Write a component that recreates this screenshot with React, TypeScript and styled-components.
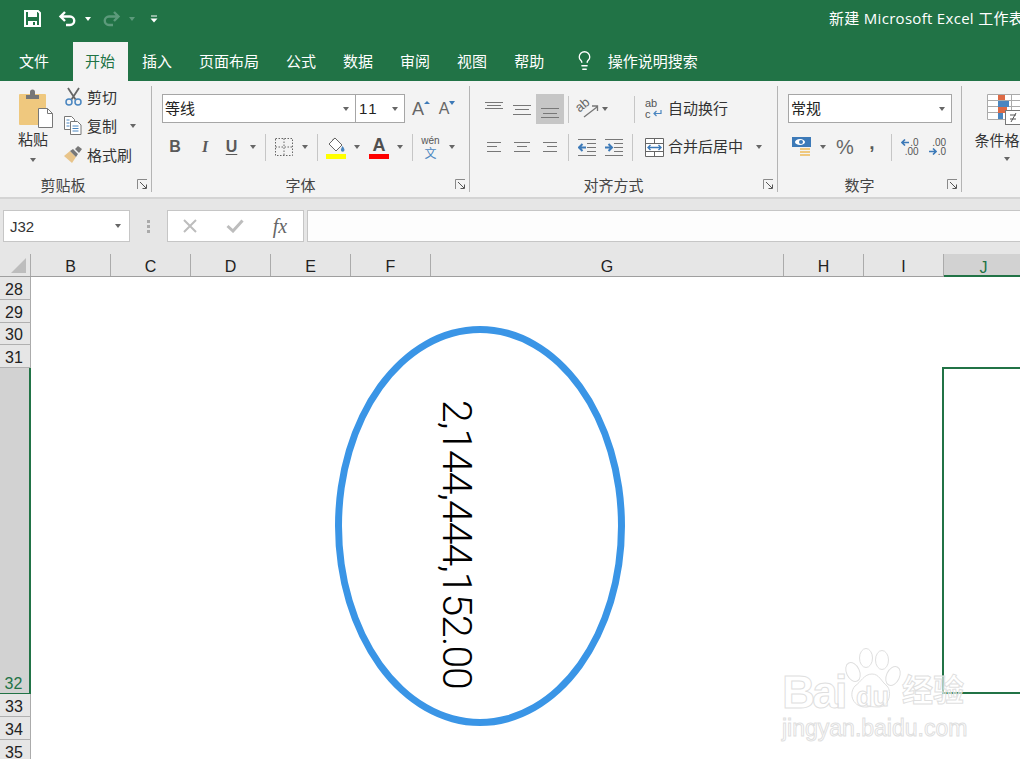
import React from "react";
import styled, { createGlobalStyle } from "styled-components";
import { Lightbulb } from "lucide-react";

const GREEN = "#217346";
const CJK = `"Noto Sans CJK SC", "Liberation Sans", sans-serif`;

const GlobalStyle = createGlobalStyle`
  html, body { margin: 0; padding: 0; background: #fff; }
  body { font-family: ${CJK}; overflow: hidden; }
`;

const Page = styled.div`
  width: 1020px;
  height: 759px;
  overflow: hidden;
  display: flex;
  flex-direction: column;
  background: #fff;
`;

/* title bar + tabs */
const TitleBar = styled.div`
  display: flex;
  align-items: center;
  height: 42px;
  background: ${GREEN};
  color: #fff;
  flex: none;
`;

const QuickAccess = styled.div`
  display: flex;
  align-items: center;
  width: 829px;
  flex: none;
  padding-left: 24px;
  box-sizing: border-box;
  height: 100%;
  padding-bottom: 5px;
`;

const Title = styled.div`
  font-size: 15px;
  font-family: "Open Sans", ${CJK};
  letter-spacing: 0.3px;
  white-space: nowrap;
  overflow: hidden;
  padding-bottom: 8px;
`;

const TabRow = styled.div`
  display: flex;
  align-items: stretch;
  height: 39px;
  background: ${GREEN};
  padding-left: 5.5px;
  flex: none;
`;

const Tab = styled.div<{ $active?: boolean; $gap?: number }>`
  display: flex;
  align-items: center;
  padding: 0 12.5px 3px;
  margin: 0 1px;
  margin-right: ${(p) => 1 + (p.$gap || 0)}px;
  font-size: 15px;
  white-space: nowrap;
  color: ${(p) => (p.$active ? GREEN : "#fff")};
  background: ${(p) => (p.$active ? "#f3f3f3" : "transparent")};
`;

const TellMe = styled.div`
  display: flex;
  align-items: center;
  gap: 13px;
  margin-left: 16px;
  padding-bottom: 2px;
  color: #fff;
  font-size: 15px;
`;

/* ribbon */
const Ribbon = styled.div`
  display: flex;
  height: 116px;
  background: #f3f3f3;
  flex: none;
  overflow: hidden;
  color: #3b3b3b;
`;

const Group = styled.div<{ $w: number }>`
  width: ${(p) => p.$w}px;
  height: 106px;
  margin-top: 5px;
  flex: none;
  box-sizing: border-box;
  border-right: 1px solid #b4b4b4;
  display: flex;
  flex-direction: column;
`;

const GroupFoot = styled.div`
  margin-top: auto;
  margin-bottom: -3px;
  height: 22px;
  display: flex;
  align-items: center;
  font-size: 15px;
  color: #444;
`;

const GroupLabel = styled.div<{ $pr?: number }>`
  flex: 1;
  text-align: center;
  padding-right: ${(p) => p.$pr || 0}px;
`;

const LauncherSlot = styled.div`
  width: 20px;
  display: flex;
  justify-content: flex-end;
  padding-right: 3px;
  box-sizing: border-box;
`;

const ToolRow = styled.div<{ $top: number; $left: number }>`
  display: flex;
  align-items: center;
  height: 30px;
  margin-top: ${(p) => p.$top}px;
  padding-left: ${(p) => p.$left}px;
`;

const Slot = styled.div<{ $w: number; $ml?: number; $active?: boolean }>`
  width: ${(p) => p.$w}px;
  height: 30px;
  margin-left: ${(p) => p.$ml || 0}px;
  flex: none;
  display: flex;
  align-items: center;
  justify-content: center;
  background: ${(p) => (p.$active ? "#c6c6c6" : "transparent")};
`;

const Sep = styled.div<{ $w: number; $ml?: number }>`
  width: ${(p) => p.$w}px;
  height: 30px;
  margin-left: ${(p) => p.$ml || 0}px;
  flex: none;
  display: flex;
  align-items: center;
  justify-content: center;
  &::before {
    content: "";
    width: 1px;
    height: 27px;
    background: #c6c6c6;
  }
`;

const Caret = styled.span<{ $color?: string }>`
  display: inline-block;
  width: 0;
  height: 0;
  border-left: 3.5px solid transparent;
  border-right: 3.5px solid transparent;
  border-top: 4px solid ${(p) => p.$color || "#666"};
`;

const UpCaret = styled.span`
  width: 0;
  height: 0;
  margin-bottom: 13px;
  border-left: 3.5px solid transparent;
  border-right: 3.5px solid transparent;
  border-bottom: 3.5px solid #3d7ab8;
`;

const DownCaret = styled(Caret)`
  margin-bottom: 13px;
`;

const ClipBody = styled.div`
  display: flex;
  margin-top: -4px;
`;

const PasteCol = styled.div`
  width: 60px;
  margin-left: 3px;
  flex: none;
  display: flex;
  flex-direction: column;
  align-items: center;
  padding-top: 7px;
  font-size: 15px;
  line-height: 20px;
  color: #333;
`;

const PasteArt = styled.div`
  margin-left: 5px;
  height: 39px;
`;

const PasteLabel = styled.div`
  margin-top: 1px;
  margin-bottom: 9px;
`;

const ClipRows = styled.div`
  display: flex;
  flex-direction: column;
`;

const ClipRow = styled.div`
  display: flex;
  align-items: center;
  height: 29px;
  font-size: 15px;
  color: #333;
`;

const ClipIcon = styled.div`
  width: 20px;
  margin-right: 4px;
  display: flex;
  justify-content: center;
`;

const ComboBox = styled.div<{ $w: number }>`
  width: ${(p) => p.$w}px;
  height: 29px;
  margin-top: -1px;
  box-sizing: border-box;
  flex: none;
  background: #fff;
  border: 1px solid #a6a6a6;
  display: flex;
  align-items: center;
  justify-content: space-between;
  padding: 0 6px 0 2px;
  font-size: 15px;
  color: #222;
  & + & {
    margin-left: -1px;
  }
`;

const ComboText = styled.span`
  margin-top: -3px;
`;

const SizeText = styled.span`
  font-family: "Liberation Sans", sans-serif;
  font-size: 15px;
  letter-spacing: 2px;
  padding-left: 1px;
`;

const Glyph = styled.span<{ $serif?: boolean; $italic?: boolean; $under?: boolean; $size?: number }>`
  font-family: ${(p) => (p.$serif ? `"Liberation Serif", serif` : `"Liberation Sans", sans-serif`)};
  font-style: ${(p) => (p.$italic ? "italic" : "normal")};
  font-weight: 700;
  font-size: ${(p) => p.$size || 16}px;
  color: #595959;
  text-decoration: ${(p) => (p.$under ? "underline" : "none")};
  text-underline-offset: 2px;
`;

const SizeGlyph = styled.span<{ $size: number }>`
  font-family: "Liberation Sans", sans-serif;
  font-size: ${(p) => p.$size}px;
  color: #666;
`;

const CommaGlyph = styled.span`
  font-family: "Liberation Sans", sans-serif;
  font-weight: 700;
  font-size: 19px;
  line-height: 19px;
  color: #595959;
  margin-top: -10px;
`;

const ColorTool = styled.div<{ $bar: string }>`
  width: 20px;
  display: flex;
  flex-direction: column;
  align-items: center;
  height: 24px;
  justify-content: flex-end;
  &::after {
    content: "";
    width: 20px;
    height: 5px;
    flex: none;
    background: ${(p) => p.$bar};
  }
`;

const ColorLetter = styled.span`
  font-family: "Liberation Sans", sans-serif;
  font-weight: 700;
  font-size: 18px;
  line-height: 17px;
  color: #4f4f4f;
`;

const Wen = styled.div`
  display: flex;
  flex-direction: column;
  align-items: center;
`;

const WenTop = styled.span`
  font-family: "Liberation Sans", sans-serif;
  font-size: 10px;
  line-height: 11px;
  color: #555;
`;

const WenBottom = styled.span`
  font-size: 12px;
  line-height: 13px;
  color: #4a86c0;
`;

const RowText = styled.span`
  font-size: 15px;
  color: #333;
  white-space: nowrap;
  margin-top: -3px;
`;

const Decimals = styled.div`
  display: grid;
  justify-items: end;
  font-family: "Liberation Sans", sans-serif;
  font-size: 10px;
  line-height: 9px;
  color: #555;
`;

const DecimalLine = styled.div`
  display: flex;
  align-items: center;
  gap: 1px;
`;

const StylesCol = styled.div`
  width: 90px;
  flex: none;
  display: flex;
  flex-direction: column;
  align-items: center;
  margin-top: 13px;
  font-size: 15px;
  color: #333;
  line-height: 20px;
  white-space: nowrap;
`;

const StylesText = styled.div`
  margin-top: 5px;
  margin-bottom: 7px;
  margin-left: -5px;
`;

/* formula bar */
const FormulaArea = styled.div`
  display: flex;
  height: 57px;
  box-sizing: border-box;
  padding-top: 11px;
  background: #e6e6e6;
  border-top: 2px solid #d4d4d4;
  flex: none;
`;

const NameBox = styled.div`
  width: 127px;
  height: 32px;
  margin-left: 3px;
  box-sizing: border-box;
  background: #fff;
  border: 1px solid #c6c6c6;
  display: flex;
  align-items: center;
  justify-content: space-between;
  padding: 0 8px 0 6px;
  font-family: "Liberation Sans", sans-serif;
  font-size: 15px;
  color: #333;
`;

const DragDots = styled.div`
  width: 37px;
  height: 32px;
  display: flex;
  flex-direction: column;
  align-items: center;
  justify-content: center;
  gap: 2px;
  span {
    width: 3px;
    height: 3px;
    background: #aaa;
  }
`;

const FxBox = styled.div`
  width: 137px;
  height: 32px;
  box-sizing: border-box;
  background: #fff;
  border: 1px solid #c6c6c6;
  display: grid;
  grid-template-columns: 44px 46px 44px;
  align-items: center;
  justify-items: center;
`;

const FxText = styled.span`
  font-family: "Liberation Serif", serif;
  font-style: italic;
  font-size: 20px;
  color: #666;
`;

const FormulaInput = styled.div`
  flex: 1;
  height: 32px;
  margin-left: 3px;
  box-sizing: border-box;
  background: #fdfdfd;
  border: 1px solid #c6c6c6;
  border-right: none;
`;

/* grid headers */
const ColumnHeaders = styled.div`
  display: flex;
  height: 23px;
  background: #e6e6e6;
  border-bottom: 1px solid #9f9f9f;
  box-sizing: border-box;
  flex: none;
`;

const Corner = styled.div`
  width: 31px;
  flex: none;
  box-sizing: border-box;
  display: flex;
  justify-content: flex-end;
  align-items: flex-end;
  padding: 0 4px 3px 0;
  border-right: 1px solid #ababab;
`;

const ColHead = styled.div<{ $w: number; $selected?: boolean }>`
  width: ${(p) => p.$w}px;
  flex: none;
  box-sizing: border-box;
  display: flex;
  align-items: center;
  justify-content: center;
  font-family: "Liberation Sans", sans-serif;
  font-size: 16px;
  padding-top: 4px;
  color: ${(p) => (p.$selected ? GREEN : "#222")};
  background: ${(p) => (p.$selected ? "#d2d2d2" : "transparent")};
  border-right: 1px solid #ababab;
  box-shadow: ${(p) => (p.$selected ? `inset 0 -2px 0 ${GREEN}` : "none")};
  height: ${(p) => (p.$selected ? "23px" : "auto")};
`;

const SheetBody = styled.div`
  flex: 1;
  display: flex;
  min-height: 0;
`;

const RowHeaders = styled.div`
  width: 31px;
  flex: none;
  display: flex;
  flex-direction: column;
  background: #e6e6e6;
`;

const RowHead = styled.div<{ $h: number; $selected?: boolean }>`
  height: ${(p) => p.$h}px;
  flex: none;
  box-sizing: border-box;
  display: flex;
  align-items: flex-end;
  justify-content: center;
  padding-right: 2px;
  font-family: "Liberation Sans", sans-serif;
  font-size: 16px;
  line-height: 19px;
  color: ${(p) => (p.$selected ? GREEN : "#222")};
  background: ${(p) => (p.$selected ? "#d2d2d2" : "transparent")};
  border-bottom: 1px solid ${(p) => (p.$selected ? GREEN : "#b0b0b0")};
  border-right: ${(p) => (p.$selected ? `2px solid ${GREEN}` : "1px solid #ababab")};
`;

const Canvas = styled.div`
  position: relative;
  flex: 1;
  background: #fff;
  overflow: hidden;
`;

const Oval = styled.div`
  position: absolute;
  left: 304px;
  top: 49px;
  width: 290px;
  height: 400px;
  box-sizing: border-box;
  border: 7px solid #3a95e6;
  border-radius: 50%;
  display: flex;
  align-items: center;
  justify-content: center;
  padding: 36px 47px 0 0;
`;

const OvalText = styled.div`
  writing-mode: vertical-rl;
  font-family: "Roboto", "Liberation Sans", sans-serif;
  font-weight: 300;
  font-size: 41px;
  line-height: 44px;
  letter-spacing: -1.1px;
  color: #000;
  white-space: nowrap;
`;

const SelectedCell = styled.div`
  position: absolute;
  left: 911px;
  top: 90px;
  width: 200px;
  height: 327px;
  box-sizing: border-box;
  border: 2px solid ${GREEN};
`;

const Watermark = styled.div`
  position: absolute;
  left: 751px;
  top: 371px;
  width: 190px;
  height: 92px;
  color: rgba(255, 255, 255, 0.6);
  -webkit-text-stroke: 1px #dfdfdf;
`;

const MarkBai = styled.span`
  position: absolute;
  left: 0;
  top: 21px;
  font-family: "Liberation Sans", sans-serif;
  font-weight: 700;
  font-size: 46px;
  line-height: 46px;
  letter-spacing: -3px;
`;

const MarkDu = styled.span`
  position: absolute;
  left: 74px;
  top: 34px;
  font-family: "Liberation Sans", sans-serif;
  font-weight: 700;
  font-size: 27px;
  line-height: 30px;
`;

const MarkJy = styled.span`
  position: absolute;
  left: 120px;
  top: 22px;
  font-weight: 700;
  font-size: 31px;
  line-height: 36px;
  white-space: nowrap;
`;

const MarkUrl = styled.span`
  position: absolute;
  left: 0;
  top: 68px;
  font-family: "Liberation Sans", sans-serif;
  font-size: 23px;
  line-height: 24px;
  white-space: nowrap;
`;

const PawSvg = styled.svg`
  position: absolute;
  left: 62px;
  top: 0;
`;

/* icons */
const SaveIcon = () => (
  <svg width="17" height="17" viewBox="0 0 17 17">
    <path d="M1 1h13l2 2v13H1z" fill="none" stroke="#fff" strokeWidth="2" />
    <path d="M4 2h9v5H4zM4 11h9v5H4z" fill="#fff" />
    <path d="M9 12h2v3H9z" fill={GREEN} />
  </svg>
);

const UndoIcon = ({ flip, color }: { flip?: boolean; color: string }) => (
  <svg width="19" height="17" viewBox="0 0 19 17" style={flip ? { transform: "scaleX(-1)" } : undefined}>
    <path
      d="M7 2 2.5 6.5 7 11M3 6.5h9a4 4 0 0 1 0 8.5H8"
      fill="none"
      stroke={color}
      strokeWidth="2.4"
    />
  </svg>
);

const CustomizeIcon = () => (
  <svg width="8" height="8" viewBox="0 0 8 8">
    <path d="M1 1h6" stroke="#fff" strokeWidth="1" />
    <path d="M0.5 3.5h7L4 7.5z" fill="#fff" />
  </svg>
);

const LauncherIcon = () => (
  <svg width="11" height="11" viewBox="0 0 11 11">
    <path d="M.5 10V.5H10" fill="none" stroke="#8a8a8a" />
    <path d="M3 3l6 6M5.5 9.5h4v-4" fill="none" stroke="#555" />
  </svg>
);

const PasteIcon = () => (
  <svg width="36" height="39" viewBox="0 0 36 39">
    <rect x="1" y="5" width="27" height="31" rx="1" fill="#efc87e" />
    <path d="M8 9V5h4V2a2 2 0 0 1 5 0v3h4v4z" transform="translate(0 1)" fill="#777" />
    <path d="M20.5 19.5h9l5 5v14h-14z" fill="#fff" stroke="#777" />
    <path d="M29.5 19.5v5h5" fill="none" stroke="#777" />
  </svg>
);

const ScissorsIcon = () => (
  <svg width="17" height="19" viewBox="0 0 17 19">
    <path d="M3 1l7.5 11.5M14 1L6.5 12.5" stroke="#666" strokeWidth="1.8" fill="none" />
    <circle cx="4" cy="15" r="3" fill="none" stroke="#4a86c0" strokeWidth="1.5" />
    <circle cx="13" cy="15" r="3" fill="none" stroke="#4a86c0" strokeWidth="1.5" />
  </svg>
);

const CopyIcon = () => (
  <svg width="18" height="19" viewBox="0 0 18 19">
    <path d="M.5.5h7l3 3v10H.5z" fill="#fff" stroke="#777" />
    <path d="M6.5 5.5h7l3.5 3.5v9.5H6.5z" fill="#fff" stroke="#777" />
    <path d="M2.5 4h3M2.5 7h3M2.5 10h3M8.5 10h6M8.5 12.5h6M8.5 15h6" stroke="#4a86c0" />
  </svg>
);

const BrushIcon = () => (
  <svg width="18" height="17" viewBox="0 0 18 17">
    <path d="M0 10l6-5 6 6-4 6z" fill="#e8c48a" />
    <path d="M6 5l3-2 5 5-2 3zM11 3l3-3 4 3-3 4z" fill="#777" />
  </svg>
);

const BorderIcon = () => (
  <svg width="18" height="18" viewBox="0 0 18 18">
    <path
      d="M.5.5h17v17H.5zM9 .5v17M.5 9h17"
      fill="none"
      stroke="#666"
      strokeDasharray="1.5 1.5"
    />
  </svg>
);

const BucketIcon = () => (
  <svg width="18" height="17" viewBox="0 0 18 17">
    <path d="M8 1l7 7-6 6-7-7z" fill="#fff" stroke="#666" />
    <path d="M5 3.5 8 1" stroke="#666" fill="none" />
    <path d="M15.5 9c1.5 2 2 3 2 4a1.8 1.8 0 0 1-3.6 0c0-1 .6-2 1.6-4z" fill="#4a86c0" />
  </svg>
);

const LinesIcon = ({ lines, w = 18 }: { lines: [number, number, number][]; w?: number }) => (
  <svg width={w} height="20" viewBox={`0 0 ${w} 20`}>
    {lines.map(([x1, x2, y]) => (
      <path key={`${x1}-${y}`} d={`M${x1} ${y + 0.5}H${x2}`} stroke="#777" />
    ))}
  </svg>
);

const OrientIcon = () => (
  <svg width="21" height="20" viewBox="0 0 21 20" overflow="visible">
    <text
      x="-1"
      y="10"
      fontFamily="Liberation Sans"
      fontSize="13"
      fill="#666"
      transform="rotate(-40 6 7)"
    >
      ab
    </text>
    <path d="M7 18 20 8M15 7h5.5v5" fill="none" stroke="#777" strokeWidth="1.3" />
  </svg>
);

const WrapIcon = () => (
  <svg width="18" height="20" viewBox="0 0 18 20" overflow="visible">
    <text x="0" y="8" fontFamily="Liberation Sans" fontSize="11" fill="#555">
      ab
    </text>
    <text x="0" y="19" fontFamily="Liberation Sans" fontSize="11" fill="#555">
      c
    </text>
    <path d="M16 11v3.5H9M11.5 12 9 14.5l2.5 2.5" fill="none" stroke="#4a86c0" strokeWidth="1.2" />
  </svg>
);

const IndentIcon = ({ increase }: { increase?: boolean }) => (
  <svg width="18" height="17" viewBox="0 0 18 17">
    <path d="M0 .5h18M9 4.5h9M9 8.5h9M9 12.5h9M0 16.5h18" stroke="#777" />
    <path
      d={increase ? "M0 8.5h6M3.5 5 7 8.5 3.5 12" : "M8 8.5H2M4.5 5 1 8.5 4.5 12"}
      fill="none"
      stroke="#3d7ab8"
      strokeWidth="2"
    />
  </svg>
);

const MergeIcon = () => (
  <svg width="19" height="19" viewBox="0 0 19 19">
    <path d="M.5.5h18v18H.5zM.5 5.5h18M.5 13.5h18M9.5.5v5M9.5 13.5v5" fill="#fff" stroke="#666" />
    <path d="M3 9.5h13M5.5 7 3 9.5 5.5 12M13.5 7l2.5 2.5-2.5 2.5" fill="none" stroke="#3d7ab8" strokeWidth="1.4" />
  </svg>
);

const CurrencyIcon = () => (
  <svg width="20" height="20" viewBox="0 0 20 20">
    <rect x="0" y="0" width="19" height="10" fill="#3d7ab8" />
    <ellipse cx="8" cy="5" rx="5" ry="3" fill="#fff" />
    <circle cx="9" cy="5" r="2" fill="#3d7ab8" />
    <path d="M8 12h10M8 15h10M8 18h10" stroke="#efc87e" strokeWidth="2.2" />
  </svg>
);

const SmallArrow = ({ left }: { left?: boolean }) => (
  <svg width="8" height="7" viewBox="0 0 8 7">
    <path d={left ? "M8 3.5H2M4 .5 1 3.5l3 3" : "M0 3.5h6M4 .5l3 3-3 3"} fill="none" stroke="#3d7ab8" strokeWidth="1.6" />
  </svg>
);

const CondFormatIcon = () => (
  <svg width="40" height="31" viewBox="0 0 40 31">
    <path d="M.5.5h38v25H.5zM.5 6.5h38M.5 12.5h38M.5 18.5h38M11.5.5v25M24.5.5v25" fill="#fff" stroke="#aaa" />
    <path d="M11 1h7v5h-7z" fill="#dd6a45" />
    <path d="M11 7h11v6H11z" fill="#4a86c0" />
    <path d="M11 13h9v6h-9z" fill="#dd6a45" />
    <path d="M11 19h5v6h-5z" fill="#4a86c0" />
    <rect x="18.5" y="16.5" width="20" height="14" fill="#fff" stroke="#777" />
    <path d="M23 21h6M23 25h6M29 19l-5 9" stroke="#555" fill="none" />
  </svg>
);

const CancelIcon = () => (
  <svg width="16" height="16" viewBox="0 0 16 16">
    <path d="M2 2l12 12M14 2 2 14" stroke="#bdbdbd" strokeWidth="2" />
  </svg>
);

const CheckIcon = () => (
  <svg width="18" height="14" viewBox="0 0 18 14">
    <path d="M1.5 7l5.5 5L16.5 1.5" fill="none" stroke="#bdbdbd" strokeWidth="3" />
  </svg>
);

const CornerTriangle = () => (
  <svg width="15" height="15" viewBox="0 0 15 15">
    <path d="M15 0v15H0z" fill="#bdbdbd" />
  </svg>
);

const Launcher = () => (
  <LauncherSlot>
    <LauncherIcon />
  </LauncherSlot>
);

const columns: { name: string; w: number; selected?: boolean }[] = [
  { name: "B", w: 80 },
  { name: "C", w: 80 },
  { name: "D", w: 80 },
  { name: "E", w: 80 },
  { name: "F", w: 80 },
  { name: "G", w: 353 },
  { name: "H", w: 80 },
  { name: "I", w: 80 },
  { name: "J", w: 80, selected: true },
];

const rows: { n: number; h: number; selected?: boolean }[] = [
  { n: 28, h: 23 },
  { n: 29, h: 22.5 },
  { n: 30, h: 22.5 },
  { n: 31, h: 23 },
  { n: 32, h: 326, selected: true },
  { n: 33, h: 23 },
  { n: 34, h: 23 },
  { n: 35, h: 23 },
];

const tabs = ["插入", "页面布局", "公式", "数据", "审阅", "视图", "帮助"];

const App = () => {
  return (
    <Page>
      <GlobalStyle />
      <TitleBar>
        <QuickAccess>
          <Slot $w={17}>
            <SaveIcon />
          </Slot>
          <Slot $w={19} $ml={17}>
            <UndoIcon color="#fff" />
          </Slot>
          <Slot $w={7} $ml={7}>
            <Caret $color="#fff" />
          </Slot>
          <Slot $w={19} $ml={11}>
            <UndoIcon flip color="#5c9a7b" />
          </Slot>
          <Slot $w={7} $ml={7}>
            <Caret $color="#5c9a7b" />
          </Slot>
          <Slot $w={8} $ml={15}>
            <CustomizeIcon />
          </Slot>
        </QuickAccess>
        <Title>新建 Microsoft Excel 工作表</Title>
      </TitleBar>

      <TabRow>
        <Tab $gap={9}>文件</Tab>
        <Tab $active>开始</Tab>
        {tabs.map((t) => (
          <Tab key={t}>{t}</Tab>
        ))}
        <TellMe>
          <Lightbulb size={21} strokeWidth={1.5} color="#fff" />
          操作说明搜索
        </TellMe>
      </TabRow>

      <Ribbon>
        <Group $w={152}>
          <ClipBody>
            <PasteCol>
              <PasteArt>
                <PasteIcon />
              </PasteArt>
              <PasteLabel>粘贴</PasteLabel>
              <Caret />
            </PasteCol>
            <ClipRows>
              <ClipRow>
                <ClipIcon>
                  <ScissorsIcon />
                </ClipIcon>
                剪切
              </ClipRow>
              <ClipRow>
                <ClipIcon>
                  <CopyIcon />
                </ClipIcon>
                复制
                <Slot $w={7} $ml={12}>
                  <Caret />
                </Slot>
              </ClipRow>
              <ClipRow>
                <ClipIcon>
                  <BrushIcon />
                </ClipIcon>
                格式刷
              </ClipRow>
            </ClipRows>
          </ClipBody>
          <GroupFoot>
            <GroupLabel $pr={5}>剪贴板</GroupLabel>
            <Launcher />
          </GroupFoot>
        </Group>

        <Group $w={318}>
          <ToolRow $top={8} $left={10}>
            <ComboBox $w={194}>
              <ComboText>等线</ComboText>
              <Caret />
            </ComboBox>
            <ComboBox $w={50}>
              <SizeText>11</SizeText>
              <Caret />
            </ComboBox>
            <Slot $w={26} $ml={3}>
              <SizeGlyph $size={18}>A</SizeGlyph>
              <UpCaret />
            </Slot>
            <Slot $w={26}>
              <SizeGlyph $size={16}>A</SizeGlyph>
              <DownCaret $color="#3d7ab8" />
            </Slot>
          </ToolRow>
          <ToolRow $top={8} $left={8}>
            <Slot $w={30}>
              <Glyph>B</Glyph>
            </Slot>
            <Slot $w={30}>
              <Glyph $serif $italic>
                I
              </Glyph>
            </Slot>
            <Slot $w={23}>
              <Glyph $under>U</Glyph>
            </Slot>
            <Slot $w={20}>
              <Caret />
            </Slot>
            <Sep $w={4} />
            <Slot $w={34}>
              <BorderIcon />
            </Slot>
            <Slot $w={8}>
              <Caret />
            </Slot>
            <Sep $w={16} />
            <Slot $w={22}>
              <ColorTool $bar="#ffff00">
                <BucketIcon />
              </ColorTool>
            </Slot>
            <Slot $w={20}>
              <Caret />
            </Slot>
            <Slot $w={24}>
              <ColorTool $bar="#ff0000">
                <ColorLetter>A</ColorLetter>
              </ColorTool>
            </Slot>
            <Slot $w={18}>
              <Caret />
            </Slot>
            <Sep $w={6} />
            <Slot $w={31}>
              <Wen>
                <WenTop>wén</WenTop>
                <WenBottom>文</WenBottom>
              </Wen>
            </Slot>
            <Slot $w={12}>
              <Caret />
            </Slot>
          </ToolRow>
          <GroupFoot>
            <GroupLabel>字体</GroupLabel>
            <Launcher />
          </GroupFoot>
        </Group>

        <Group $w={308}>
          <ToolRow $top={8} $left={10}>
            <Slot $w={28}>
              <LinesIcon lines={[[0, 18, 3], [2, 16, 6], [0, 18, 9]]} />
            </Slot>
            <Slot $w={28}>
              <LinesIcon lines={[[0, 18, 6], [2, 16, 10], [0, 18, 15]]} />
            </Slot>
            <Slot $w={28} $active>
              <LinesIcon lines={[[0, 18, 9], [2, 16, 14], [0, 18, 18]]} />
            </Slot>
            <Sep $w={8} />
            <Slot $w={30}>
              <OrientIcon />
            </Slot>
            <Slot $w={6}>
              <Caret />
            </Slot>
            <Sep $w={4} $ml={24} />
            <Slot $w={28} $ml={4}>
              <WrapIcon />
            </Slot>
            <RowText>自动换行</RowText>
          </ToolRow>
          <ToolRow $top={8} $left={10}>
            <Slot $w={28}>
              <LinesIcon w={14} lines={[[0, 14, 5], [0, 10, 9], [0, 14, 14]]} />
            </Slot>
            <Slot $w={28}>
              <LinesIcon w={16} lines={[[0, 16, 5], [3, 13, 9], [0, 16, 14]]} />
            </Slot>
            <Slot $w={28}>
              <LinesIcon w={14} lines={[[0, 14, 5], [4, 14, 9], [0, 14, 14]]} />
            </Slot>
            <Sep $w={8} />
            <Slot $w={30}>
              <IndentIcon />
            </Slot>
            <Slot $w={28} $ml={-2}>
              <IndentIcon increase />
            </Slot>
            <Sep $w={8} />
            <Slot $w={28} $ml={4}>
              <MergeIcon />
            </Slot>
            <RowText>合并后居中</RowText>
            <Slot $w={7} $ml={12}>
              <Caret />
            </Slot>
          </ToolRow>
          <GroupFoot>
            <GroupLabel>对齐方式</GroupLabel>
            <Launcher />
          </GroupFoot>
        </Group>

        <Group $w={184}>
          <ToolRow $top={8} $left={10}>
            <ComboBox $w={164}>
              <ComboText>常规</ComboText>
              <Caret />
            </ComboBox>
          </ToolRow>
          <ToolRow $top={8} $left={10}>
            <Slot $w={27}>
              <CurrencyIcon />
            </Slot>
            <Slot $w={16}>
              <Caret />
            </Slot>
            <Slot $w={28}>
              <SizeGlyph $size={20}>%</SizeGlyph>
            </Slot>
            <Slot $w={26}>
              <CommaGlyph>,</CommaGlyph>
            </Slot>
            <Sep $w={12} />
            <Slot $w={26}>
              <Decimals>
                <DecimalLine>
                  <SmallArrow left />
                  .0
                </DecimalLine>
                <DecimalLine>.00</DecimalLine>
              </Decimals>
            </Slot>
            <Slot $w={29}>
              <Decimals>
                <DecimalLine>.00</DecimalLine>
                <DecimalLine>
                  <SmallArrow />
                  .0
                </DecimalLine>
              </Decimals>
            </Slot>
          </ToolRow>
          <GroupFoot>
            <GroupLabel>数字</GroupLabel>
            <Launcher />
          </GroupFoot>
        </Group>

        <StylesCol>
          <CondFormatIcon />
          <StylesText>条件格式</StylesText>
          <Caret />
        </StylesCol>
      </Ribbon>

      <FormulaArea>
        <NameBox>
          J32
          <Caret />
        </NameBox>
        <DragDots>
          <span />
          <span />
          <span />
        </DragDots>
        <FxBox>
          <CancelIcon />
          <CheckIcon />
          <FxText>fx</FxText>
        </FxBox>
        <FormulaInput />
      </FormulaArea>

      <ColumnHeaders>
        <Corner>
          <CornerTriangle />
        </Corner>
        {columns.map((c) => (
          <ColHead key={c.name} $w={c.w} $selected={c.selected}>
            {c.name}
          </ColHead>
        ))}
      </ColumnHeaders>

      <SheetBody>
        <RowHeaders>
          {rows.map((r) => (
            <RowHead key={r.n} $h={r.h} $selected={r.selected}>
              {r.n}
            </RowHead>
          ))}
        </RowHeaders>
        <Canvas>
          <Oval>
            <OvalText>2,144,444,152.00</OvalText>
          </Oval>
          <SelectedCell />
          <Watermark>
            <PawSvg width="60" height="62" viewBox="0 0 60 62">
              <g fill="rgba(255,255,255,0.6)" stroke="#dfdfdf">
                <ellipse cx="9" cy="24" rx="6.5" ry="10" transform="rotate(-25 9 24)" />
                <ellipse cx="22" cy="10" rx="6.5" ry="9.5" />
                <ellipse cx="38" cy="12" rx="6.5" ry="9.5" />
                <ellipse cx="49" cy="28" rx="6.5" ry="10" transform="rotate(25 49 28)" />
                <path d="M28 26c7 0 9 7 15 12 5 5 3 22-10 21-4 0-7-1-10 0C9 60 4 46 11 38c6-4 9-12 17-12z" />
              </g>
            </PawSvg>
            <MarkBai>Bai</MarkBai>
            <MarkDu>du</MarkDu>
            <MarkJy>经验</MarkJy>
            <MarkUrl>jingyan.baidu.com</MarkUrl>
          </Watermark>
        </Canvas>
      </SheetBody>
    </Page>
  );
};

export default App;
